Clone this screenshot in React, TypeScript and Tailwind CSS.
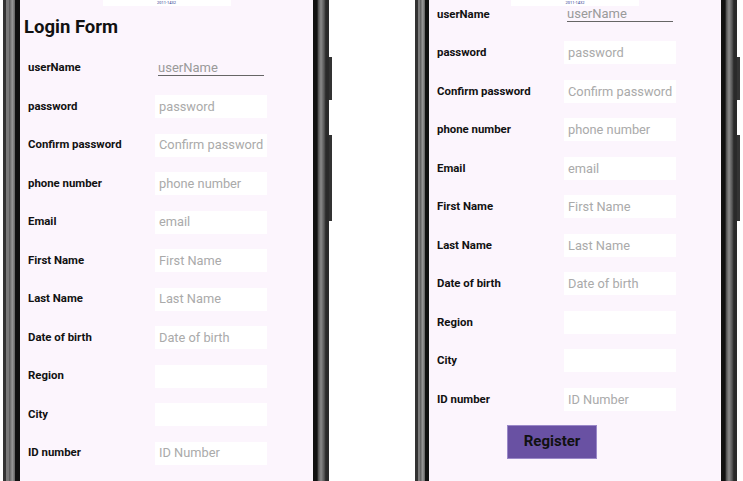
const fields = [
  { label: "password", placeholder: "password" },
  { label: "Confirm password", placeholder: "Confirm password" },
  { label: "phone number", placeholder: "phone number" },
  { label: "Email", placeholder: "email" },
  { label: "First Name", placeholder: "First Name" },
  { label: "Last Name", placeholder: "Last Name" },
  { label: "Date of birth", placeholder: "Date of birth" },
  { label: "Region", placeholder: "" },
  { label: "City", placeholder: "" },
  { label: "ID number", placeholder: "ID Number" },
];

const Row = ({ label, children }: { label: string; children: React.ReactNode }) => (
  <div className="flex h-[38.5px] shrink-0 items-center">
    <span className="w-[135px] shrink-0 pl-2 text-[11.4px] font-bold text-[#111]">{label}</span>
    {children}
  </div>
);

const Form = ({ withTitle }: { withTitle?: boolean }) => (
  <div className="flex flex-col">
    {withTitle && (
      <h1 className="flex h-[48.75px] items-center pl-1 pt-[6px] text-[18.5px] font-bold text-[#111]">Login Form</h1>
    )}
    <Row label="userName">
      <div className="ml-[3px] w-[106px] border-b-[1.5px] border-[#666] text-[13px] leading-[15px] text-[#9a9a9a]">userName</div>
    </Row>
    {fields.map((f) => (
      <Row key={f.label} label={f.label}>
        <div className="flex h-[23px] w-[112px] items-center bg-white pl-1 text-[12.8px] text-[#aaa]">{f.placeholder}</div>
      </Row>
    ))}
  </div>
);

const Phone = ({ children, width, side }: { children: React.ReactNode; width: string; side: string }) => (
  <div className="flex h-[481px] shrink-0">
    <div className={`${side} bg-[linear-gradient(to_right,#333_0%,#333_18%,#7a7a7a_18%,#7a7a7a_35%,#555_35%,#999_55%,#6a6a6a_68%,#111_70%,#111_100%)]`} />
    <div className={`relative h-full overflow-hidden bg-[#fcf5fd] ${width}`}>
      <div className="absolute left-1/2 top-0 z-10 flex h-[6px] w-[128px] -translate-x-1/2 justify-center bg-white">
        <span className="text-[4px] leading-[6px] text-[#2a3690]">2011-1432</span>
      </div>
      {children}
    </div>
    <div className="w-[16px] bg-[linear-gradient(to_right,#111_0%,#111_25%,#5a5a5a_35%,#8a8a8a_50%,#555_70%,#2a2a2a_80%,#2a2a2a_100%)]" />
    <div className="flex w-[3px] flex-col">
      <div className="h-[57px]" />
      <div className="h-[43px] bg-[#333]" />
      <div className="h-[35px]" />
      <div className="h-[86px] bg-[#333]" />
    </div>
  </div>
);

export default function App() {
  return (
    <div className="flex h-[481px] w-[743px] overflow-hidden bg-white font-['Roboto',sans-serif]">
      <div className="ml-[3px]">
        <Phone width="w-[293px]" side="w-[17px]">
          <Form withTitle />
        </Phone>
      </div>
      <div className="ml-[83px]">
        <Phone width="w-[292px]" side="w-[14px]">
          <div className="-mt-[5px]">
            <Form />
            <button className="ml-[78px] mt-[6px] h-[34px] w-[90px] border border-[#9a88c8] bg-[#6951a3] text-[15px] font-bold text-[#111]">
              Register
            </button>
          </div>
        </Phone>
      </div>
    </div>
  );
}
